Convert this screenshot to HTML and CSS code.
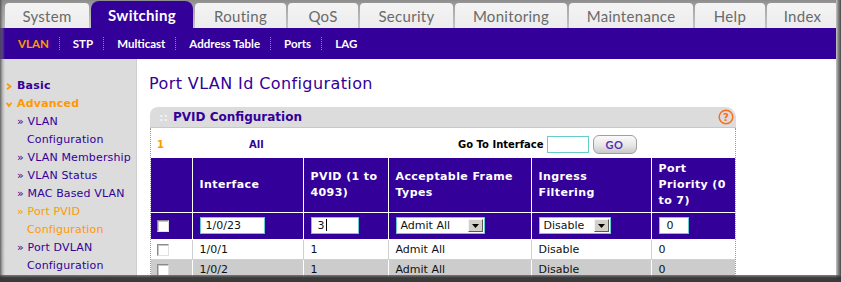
FILE: index.html
```html
<!DOCTYPE html>
<html>
<head>
<meta charset="utf-8">
<title>Port VLAN Id Configuration</title>
<link rel="stylesheet" href="styles.css">
</head>
<body>
<div class="screen">
  <nav class="tabs">
    <span class="tab t-system">System</span>
    <span class="tab t-switching active">Switching</span>
    <span class="tab t-routing">Routing</span>
    <span class="tab t-qos">QoS</span>
    <span class="tab t-security">Security</span>
    <span class="tab t-monitoring">Monitoring</span>
    <span class="tab t-maint">Maintenance</span>
    <span class="tab t-help">Help</span>
    <span class="tab t-index">Index</span>
  </nav>
  <nav class="subnav">
    <span class="sub current">VLAN</span><span class="sep"></span>
    <span class="sub">STP</span><span class="sep"></span>
    <span class="sub">Multicast</span><span class="sep"></span>
    <span class="sub">Address Table</span><span class="sep"></span>
    <span class="sub">Ports</span><span class="sep"></span>
    <span class="sub">LAG</span>
  </nav>
  <div class="content">
    <aside class="side">
      <div class="grp"><svg class="chev" width="6" height="7" viewBox="0 0 6 7"><path d="M1 0.8 L4.5 3.5 L1 6.2" fill="none" stroke="#ff9900" stroke-width="1.8"/></svg>Basic</div>
      <div class="grp open"><svg class="chev" width="6" height="7" viewBox="0 0 6 7"><path d="M0.6 1.8 L3 5 L5.4 1.8" fill="none" stroke="#ff9900" stroke-width="1.8"/></svg>Advanced</div>
      <div class="item">» VLAN Configuration</div>
      <div class="item">» VLAN Membership</div>
      <div class="item">» VLAN Status</div>
      <div class="item">» MAC Based VLAN</div>
      <div class="item sel">» Port PVID Configuration</div>
      <div class="item">» Port DVLAN Configuration</div>
      <div class="item">» Protocol Based VLAN</div>
    </aside>
    <main class="main">
      <h1 class="title">Port VLAN Id Configuration</h1>
      <section class="panel">
        <div class="panel-head">
          <span class="grip">::</span>
          <span class="panel-title">PVID Configuration</span>
          <svg class="help" width="16" height="16" viewBox="0 0 16 16"><circle cx="8" cy="8" r="6.8" fill="none" stroke="#ff6a1a" stroke-width="1.4"/><text x="8" y="12" text-anchor="middle" font-family="DejaVu Sans, sans-serif" font-weight="bold" font-size="10" fill="#ff6a1a">?</text></svg>
        </div>
        <div class="panel-body">
          <div class="tools">
            <span class="pg-num">1</span>
            <span class="pg-all">All</span>
            <span class="goto-label">Go To Interface</span>
            <span class="field goto-field"></span>
            <span class="go-btn">GO</span>
          </div>
          <table class="grid">
            <colgroup>
              <col class="c1"><col class="c2"><col class="c3"><col class="c4"><col class="c5"><col class="c6">
            </colgroup>
            <thead>
              <tr class="head">
                <th></th>
                <th>Interface</th>
                <th>PVID (1 to<br>4093)</th>
                <th>Acceptable Frame<br>Types</th>
                <th>Ingress<br>Filtering</th>
                <th>Port<br>Priority (0<br>to 7)</th>
              </tr>
            </thead>
            <tbody>
              <tr class="edit">
                <td><span class="cb"></span></td>
                <td><span class="field f-if">1/0/23</span></td>
                <td><span class="field f-pvid">3<span class="caret"></span></span></td>
                <td><span class="select s-frame"><span class="sel-text">Admit All</span><span class="sel-btn"><svg width="7" height="4" viewBox="0 0 7 4"><path d="M0 0 H7 L3.5 4 Z" fill="#000"/></svg></span></span></td>
                <td><span class="select s-ingress"><span class="sel-text">Disable</span><span class="sel-btn"><svg width="7" height="4" viewBox="0 0 7 4"><path d="M0 0 H7 L3.5 4 Z" fill="#000"/></svg></span></span></td>
                <td><span class="field f-prio">0</span></td>
              </tr>
              <tr class="row odd">
                <td><span class="cb"></span></td>
                <td>1/0/1</td>
                <td>1</td>
                <td>Admit All</td>
                <td>Disable</td>
                <td>0</td>
              </tr>
              <tr class="row even">
                <td><span class="cb"></span></td>
                <td>1/0/2</td>
                <td>1</td>
                <td>Admit All</td>
                <td>Disable</td>
                <td>0</td>
              </tr>
            </tbody>
          </table>
        </div>
      </section>
    </main>
  </div>
  <div class="shade shade-left"></div>
  <div class="shade shade-right"></div>
  <div class="shade shade-bottom"></div>
</div>
</body>
</html>
```
FILE: styles.css
```css
* { box-sizing: border-box; }
html, body { margin: 0; padding: 0; background: #ffffff; overflow: hidden; }
.screen {
  position: relative;
  width: 841px;
  height: 282px;
  overflow: hidden;
  display: flex;
  flex-direction: column;
  background: #ffffff;
  font-family: "DejaVu Sans", Verdana, sans-serif;
}

/* top tabs */
.tabs {
  display: flex;
  gap: 2px;
  height: 28px;
  padding: 3px 0 0 5px;
  background: linear-gradient(#8c8c8c, #a9a9a9 30%, #c4c4c4);
  font-family: Lato, "Open Sans", sans-serif;
  font-size: 15px;
  color: #6a6a6a;
  align-items: flex-end;
  flex: none;
}
.tab {
  height: 25px;
  display: flex;
  align-items: center;
  justify-content: center;
  background: linear-gradient(#f4f4f4, #ececec);
  border-radius: 4px 4px 0 0;
  letter-spacing: 0.3px;
  padding-top: 1px;
}
.tab.active {
  height: 27px;
  background: #330099;
  color: #ffffff;
  font-weight: bold;
  border-radius: 8px 8px 0 0;
}
.t-system { width: 84px; }
.t-switching { width: 102px; }
.t-routing { width: 91px; }
.t-qos { width: 70px; }
.t-security { width: 93px; }
.t-monitoring { width: 112px; }
.t-maint { width: 124px; }
.t-help { width: 70px; }
.t-index { width: 71px; }

/* sub navigation */
.subnav {
  flex: none;
  height: 31px;
  background: #330099;
  display: flex;
  align-items: center;
  padding-left: 18px;
  font-family: Lato, "Open Sans", sans-serif;
  font-weight: bold;
  font-size: 11.5px;
  color: #ffffff;
}
.sub.current { color: #ff9900; }
.sep {
  width: 0;
  height: 13px;
  border-left: 1px dotted #8f7fc9;
  margin: 0 13px 0 10px;
}

/* content */
.content {
  flex: 1;
  display: flex;
  min-height: 0;
}
.side {
  width: 137px;
  flex: none;
  background: #dcdcdc;
  border-right: 1px solid #cfcfcf;
  padding-top: 18px;
  font-size: 11px;
  line-height: 18px;
  color: #330099;
}
.grp {
  font-weight: bold;
  padding-left: 17px;
  position: relative;
  letter-spacing: 0.2px;
}
.grp .chev { position: absolute; left: 6px; top: 6px; }
.grp.open { color: #ff9900; }
.item {
  padding-left: 27px;
  text-indent: -10px;
  letter-spacing: 0.15px;
}
.item.sel { color: #ff9900; }

.main {
  flex: 1;
  padding: 15px 0 0 12px;
  min-width: 0;
}
.title {
  margin: 0 0 13px 0;
  font-size: 16px;
  line-height: 20px;
  font-weight: normal;
  color: #330099;
  letter-spacing: 0.4px;
}
.panel { width: 586px; margin-left: 1px; }
.panel-head {
  height: 21px;
  background: #dcdcdc;
  border-bottom: 1px solid #c8c8c8;
  border-radius: 8px 11px 0 0;
  display: flex;
  align-items: center;
  padding-left: 9px;
}
.grip { color: #f2f2f2; font-weight: bold; font-size: 11px; width: 14px; }
.panel-title { font-weight: bold; font-size: 12px; color: #330099; flex: 1; }
.help { margin-right: 2px; }
.panel-body {
  border-left: 1px dotted #9a9a9a;
  border-right: 1px dotted #9a9a9a;
}
.tools {
  height: 30px;
  display: flex;
  align-items: center;
  padding: 2px 0 0 6px;
  font-weight: bold;
  font-size: 10px;
}
.pg-num { width: 92px; color: #ff9900; }
.pg-all { width: 209px; color: #330099; }
.goto-label { color: #000000; }
.field {
  display: inline-block;
  height: 17px;
  border: 1px solid #66cccc;
  background: #ffffff;
  font-size: 11px;
  font-weight: normal;
  line-height: 15px;
  padding-left: 4px;
  color: #111;
  vertical-align: middle;
}
.goto-field { width: 42px; margin-left: 3px; }
.go-btn {
  margin-left: 4px;
  width: 44px;
  height: 19px;
  border: 1px solid #a0a0a0;
  border-radius: 6px;
  background: linear-gradient(#fbfbfb, #e6e6e6 55%, #c9c9c9);
  color: #5a2fb5;
  font-family: Lato, sans-serif;
  font-weight: bold;
  font-size: 11px;
  display: flex;
  align-items: center;
  justify-content: center;
  letter-spacing: 0.5px;
}

/* table */
.grid {
  width: 584px;
  border-collapse: collapse;
  table-layout: fixed;
  font-size: 11px;
}
.c1 { width: 41px; }
.c2 { width: 111px; }
.c3 { width: 85px; }
.c4 { width: 143px; }
.c5 { width: 120px; }
.c6 { width: 84px; }
.grid th, .grid td {
  padding: 0 0 0 7px;
  text-align: left;
  vertical-align: middle;
  border-left: 1px solid #ffffff;
  border-bottom: 1px solid #ffffff;
  white-space: nowrap;
}
.grid th:first-child, .grid td:first-child { border-left: none; padding-left: 6px; }
.head th {
  height: 54px;
  background: #330099;
  color: #ffffff;
  font-weight: bold;
  line-height: 16px;
  letter-spacing: 0.4px;
}
.edit td { height: 27px; background: #330099; }
.row td { height: 20px; color: #111; padding-top: 1px; }
.row.odd td { background: #ffffff; border-left-color: #d0d0d0; border-bottom-color: #d0d0d0; }
.row.even td { background: #cccccc; }
.cb {
  display: inline-block;
  width: 12px;
  height: 12px;
  background: #ffffff;
  border: 1px solid;
  border-color: #8a8a8a #e0e0e0 #e0e0e0 #8a8a8a;
  box-shadow: inset 1px 1px 0 #c8c8c8;
  vertical-align: middle;
}
.f-if { width: 65px; padding-left: 5px; }
.f-pvid { width: 48px; padding-left: 6px; }
.f-prio { width: 30px; padding-left: 7px; }
.caret {
  display: inline-block;
  width: 1px;
  height: 12px;
  background: #000;
  vertical-align: -2px;
  margin-left: 1px;
}
.select {
  display: inline-flex;
  align-items: center;
  height: 17px;
  border: 1px solid #66cccc;
  background: #ffffff;
  vertical-align: middle;
  padding: 0 1px 0 4px;
  font-size: 11px;
  color: #111;
}
.s-frame { width: 89px; }
.s-ingress { width: 72px; }
.sel-text { flex: 1; }
.sel-btn {
  width: 15px;
  height: 13px;
  background: #d4d0c8;
  border: 1px solid;
  border-color: #f4f4f4 #5a5a5a #5a5a5a #f4f4f4;
  display: flex;
  align-items: center;
  justify-content: center;
}

/* window frame shading (over content) */
.shade { position: absolute; pointer-events: none; }
.shade-left {
  left: 0; top: 0; bottom: 0; width: 5px;
  background: linear-gradient(to right, rgba(80,80,80,0.85), rgba(130,130,130,0.45) 50%, rgba(160,160,160,0));
}
.shade-right {
  right: 0; top: 0; bottom: 0; width: 5px;
  background: linear-gradient(to right, #c9c9c9, #8a8a8a 40%, #4a4a4a);
}
.shade-bottom {
  left: 0; right: 0; bottom: 0; height: 7px;
  background: linear-gradient(rgba(90,90,90,0.75), rgba(50,50,50,0.95) 40%, #3a3a3a);
}
```
